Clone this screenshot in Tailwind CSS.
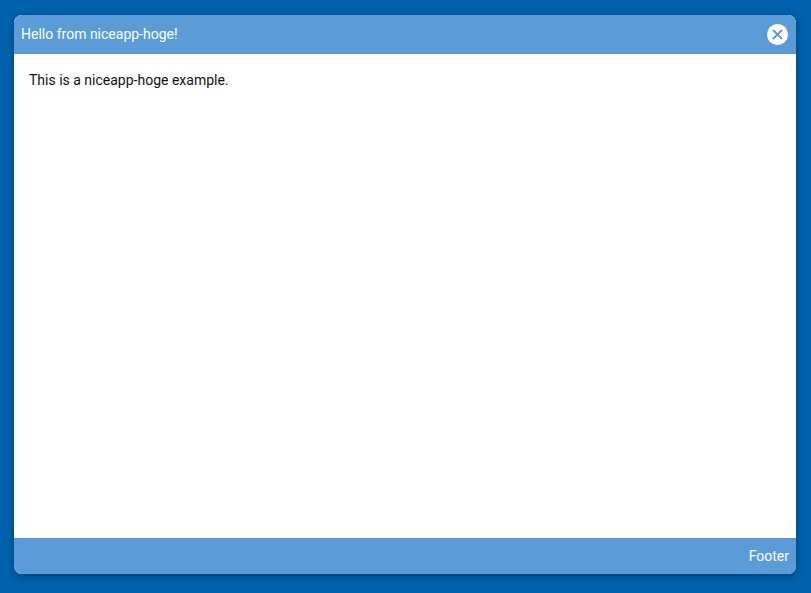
<!DOCTYPE html>
<html lang="en">
<head>
    <meta charset="UTF-8">
    <meta name="viewport" content="width=device-width, initial-scale=1.0">
    <script src="https://cdn.jsdelivr.net/npm/@tailwindcss/browser@4"></script>
    <title>niceapp-hoge</title>
</head>
<body class="bg-[#0062ad] h-[593px] w-[811px] overflow-hidden font-['Roboto',sans-serif]">
    <div class="pt-[15px] pl-[14px] pr-[15px] pb-[19px] h-full">
        <div class="flex flex-col h-full bg-white rounded-[8px] overflow-hidden shadow-[0_2px_10px_rgba(0,0,0,0.35)]">
            <div class="flex items-center justify-between h-[39px] shrink-0 bg-[#5b9bd8] pl-[7px] pr-[8px] text-white text-[14px]">
                <span>Hello from niceapp-hoge!</span>
                <div class="flex items-center justify-center w-[21px] h-[21px] rounded-full bg-white">
                    <svg width="13" height="13" viewBox="0 0 13 13" fill="none" stroke="#5b9bd8" stroke-width="1.8">
                        <path d="M2 2L11 11M11 2L2 11"/>
                    </svg>
                </div>
            </div>
            <div class="flex-1 px-[15px] pt-[18px] text-[14px] leading-[17px] text-[#111]">
                This is a niceapp-hoge example.
            </div>
            <div class="flex items-center justify-end h-[36px] shrink-0 bg-[#5b9bd8] pr-[7px] text-white text-[14px]">
                Footer
            </div>
        </div>
    </div>
</body>
</html>
